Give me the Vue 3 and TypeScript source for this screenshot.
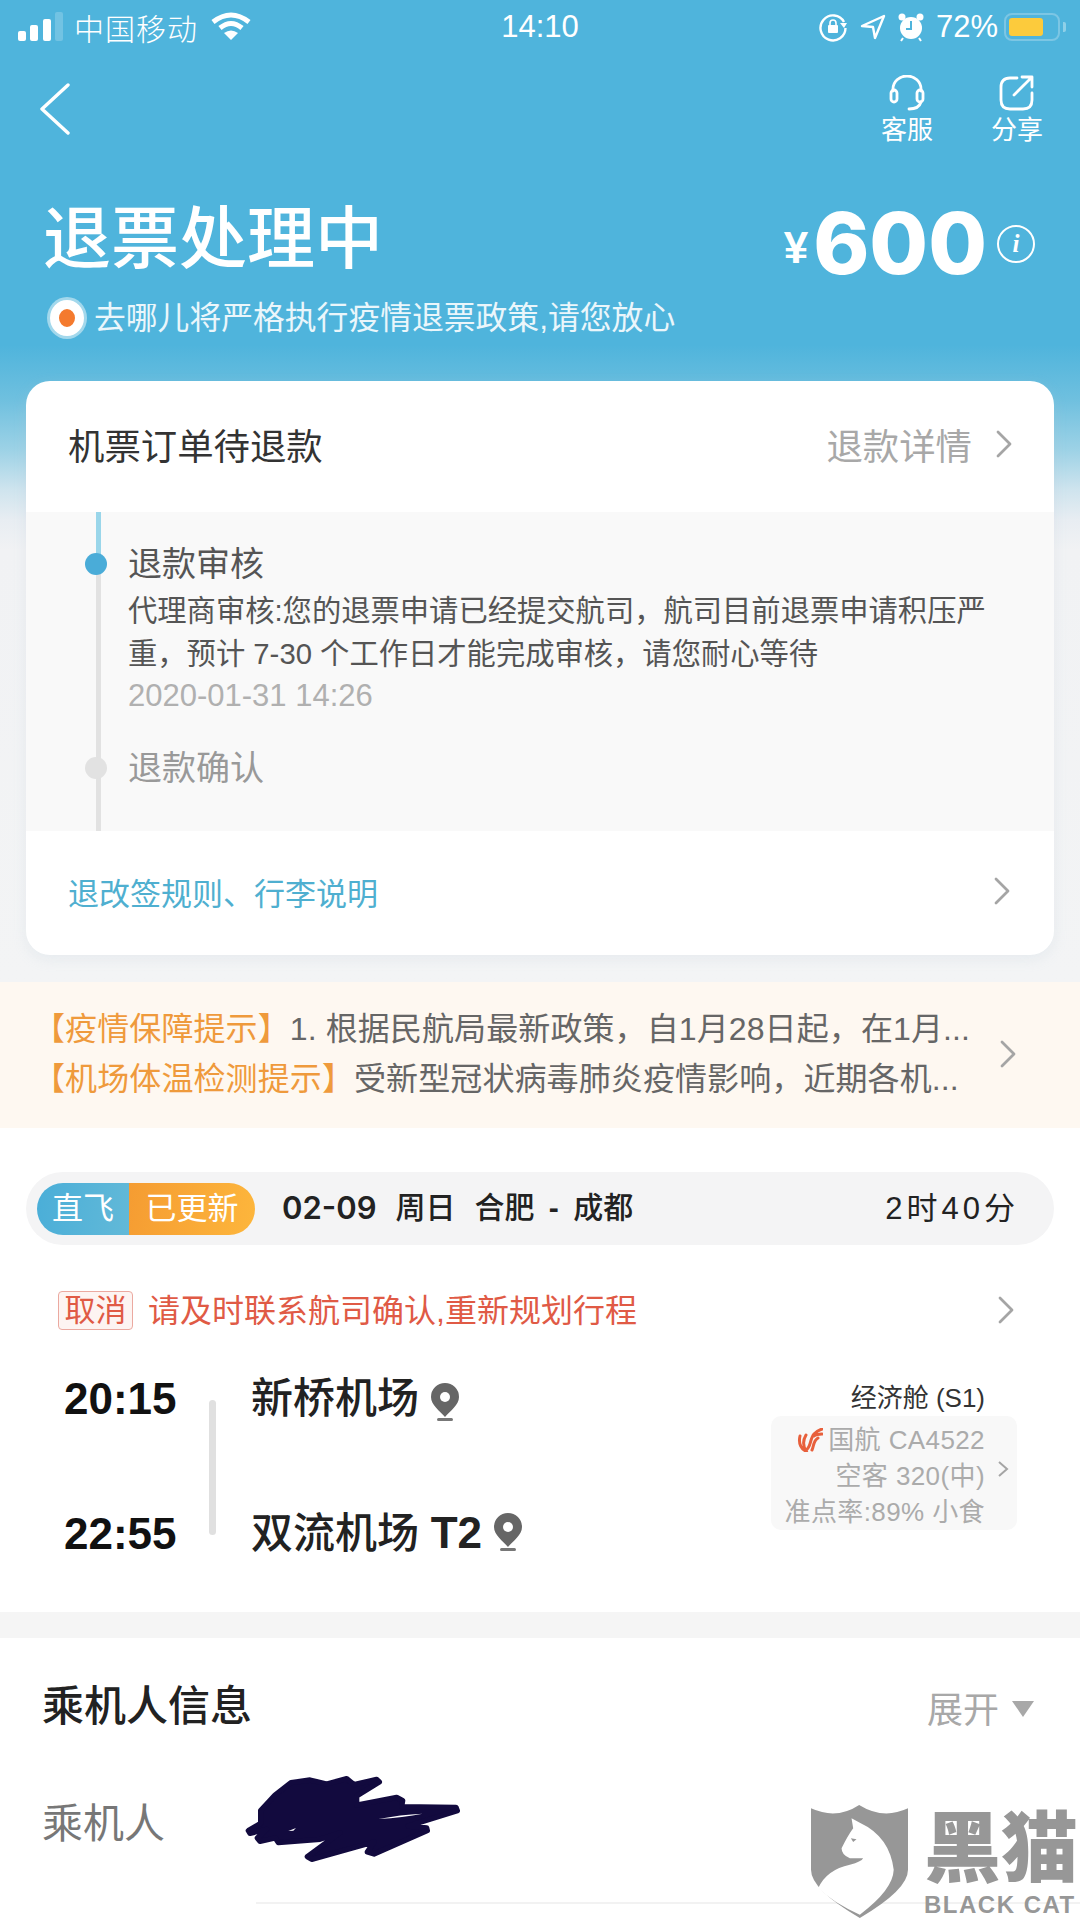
<template>
  <div class="page">
    <div class="top">
      <header class="hero">
        <div class="status">
          <div class="status-left">
            <svg class="signal" viewBox="0 0 46 30" width="46" height="30">
              <rect x="0" y="19" width="8" height="10" rx="2" fill="#fff" />
              <rect x="12" y="13" width="8" height="16" rx="2" fill="#fff" />
              <rect x="25" y="7" width="8" height="22" rx="2" fill="#fff" />
              <rect x="37" y="0" width="8" height="29" rx="2" fill="#fff" opacity="0.2" />
            </svg>
            <span class="carrier">中国移动</span>
            <svg class="wifi" viewBox="0 0 40 30" width="40" height="30" fill="none" stroke="#fff" stroke-width="5">
              <path d="M2 11 Q20 -3 38 11" />
              <path d="M9 17 Q20 8 31 17" />
              <path d="M20 29 L13 22 Q20 17 27 22 Z" fill="#fff" stroke="none" />
            </svg>
          </div>
          <span class="clock">14:10</span>
          <div class="status-right">
            <svg viewBox="0 0 30 30" width="30" height="30" fill="none" stroke="#fff" stroke-width="2.4">
              <path d="M26 10 A12.5 12.5 0 1 0 27.5 16" />
              <path d="M22 11 L29 11 L26 16 Z" fill="#fff" stroke="none" />
              <rect x="10" y="13" width="10" height="8" rx="1" fill="#fff" stroke="none" />
              <path d="M12 13 V11 A3 3 0 0 1 18 11 V13" stroke-width="1.6" />
            </svg>
            <svg viewBox="0 0 26 26" width="26" height="26" fill="none" stroke="#fff" stroke-width="2.4" stroke-linejoin="round">
              <path d="M2 12 L24 2 L15 24 L13 13 Z" />
            </svg>
            <svg viewBox="0 0 26 30" width="26" height="30">
              <circle cx="13" cy="16" r="11" fill="#fff" />
              <path d="M13 9 V17 H8" fill="none" stroke="#4fb4dc" stroke-width="2" />
              <circle cx="4" cy="5" r="3.5" fill="#fff" />
              <circle cx="22" cy="5" r="3.5" fill="#fff" />
              <path d="M5 26 L3 29 M21 26 L23 29" stroke="#fff" stroke-width="2" />
            </svg>
            <span class="percent">72%</span>
            <div class="battery"><i class="battery-fill"></i></div>
            <i class="battery-cap"></i>
          </div>
        </div>

        <div class="nav">
          <svg class="back" viewBox="0 0 30 52" width="30" height="52" fill="none" stroke="#fff" stroke-width="3.4" stroke-linecap="round" stroke-linejoin="round">
            <path d="M28 2 L2 26 L28 50" />
          </svg>
          <div class="nav-actions">
            <div class="nav-action">
              <svg viewBox="0 0 36 36" width="36" height="36" fill="none" stroke="#fff" stroke-width="2.8" stroke-linecap="round">
                <path d="M4 16 V14 A14 13 0 0 1 32 14 V16" />
                <rect x="2" y="15" width="6" height="12" rx="3" />
                <rect x="28" y="15" width="6" height="12" rx="3" />
                <path d="M32 27 Q30 34 20 34" />
              </svg>
              <span>客服</span>
            </div>
            <div class="nav-action">
              <svg viewBox="0 0 36 36" width="36" height="36" fill="none" stroke="#fff" stroke-width="2.8" stroke-linecap="round" stroke-linejoin="round">
                <path d="M18 3 H11 Q2 3 2 12 V25 Q2 34 11 34 H24 Q33 34 33 25 V18" />
                <path d="M15 20 L33 2 M23 2 H33 V12" />
              </svg>
              <span>分享</span>
            </div>
          </div>
        </div>

        <div class="headline">
          <h1>退票处理中</h1>
          <div class="amount">
            <span class="yen">¥</span><span class="sum">600</span>
            <span class="info">i</span>
          </div>
        </div>
        <div class="assure">
          <i class="assure-dot"></i>
          <span>去哪儿将严格执行疫情退票政策,请您放心</span>
        </div>
      </header>

      <section class="card">
        <div class="card-head">
          <span class="card-title">机票订单待退款</span>
          <span class="card-more">退款详情<svg class="chev" viewBox="0 0 16 28" width="16" height="28"><path d="M2 2 L14 14 L2 26" /></svg></span>
        </div>
        <div class="timeline">
          <div class="step">
            <i class="dot active"></i>
            <div class="step-title">退款审核</div>
            <p class="step-desc">代理商审核:您的退票申请已经提交航司，航司目前退票申请积压严重，预计 7-30 个工作日才能完成审核，请您耐心等待</p>
            <div class="step-date">2020-01-31 14:26</div>
          </div>
          <div class="step pending">
            <i class="dot"></i>
            <div class="step-title">退款确认</div>
          </div>
        </div>
        <div class="card-foot">
          <span>退改签规则、行李说明</span>
          <svg class="chev" viewBox="0 0 16 28" width="16" height="28"><path d="M2 2 L14 14 L2 26" /></svg>
        </div>
      </section>
    </div>

    <section class="notice">
      <div class="notice-lines">
        <div v-for="n in notices" :key="n.tag" class="notice-line"><em>【{{ n.tag }}】</em>{{ n.text }}</div>
      </div>
      <svg class="chev" viewBox="0 0 16 28" width="16" height="28"><path d="M2 2 L14 14 L2 26" /></svg>
    </section>

    <section class="flight">
      <div class="pill">
        <div class="tags"><span class="tag-blue">直飞</span><span class="tag-orange">已更新</span></div>
        <div class="route">
          <span class="route-date">02-09</span>
          <span>周日</span>
          <span class="route-city">合肥 <b>-</b> 成都</span>
        </div>
        <span class="duration">2时40分</span>
      </div>

      <div class="cancel">
        <span class="cancel-badge">取消</span>
        <span class="cancel-msg">请及时联系航司确认,重新规划行程</span>
        <svg class="chev" viewBox="0 0 16 28" width="16" height="28"><path d="M2 2 L14 14 L2 26" /></svg>
      </div>

      <div class="legs">
        <div class="times">
          <span>20:15</span>
          <span>22:55</span>
        </div>
        <i class="leg-line"></i>
        <div class="airports">
          <div class="airport">新桥机场
            <svg class="pin" viewBox="0 0 28 38" width="28" height="38">
              <path d="M14 0 A14 14 0 0 1 28 14 C28 22 19 28 14 34 C9 28 0 22 0 14 A14 14 0 0 1 14 0 Z" fill="#666" />
              <circle cx="14" cy="14" r="5" fill="#fff" />
              <rect x="6" y="35" width="16" height="3" rx="1.5" fill="#777" />
            </svg>
          </div>
          <div class="airport"><span>双流机场 <b>T2</b></span>
            <svg class="pin" viewBox="0 0 28 38" width="28" height="38">
              <path d="M14 0 A14 14 0 0 1 28 14 C28 22 19 28 14 34 C9 28 0 22 0 14 A14 14 0 0 1 14 0 Z" fill="#666" />
              <circle cx="14" cy="14" r="5" fill="#fff" />
              <rect x="6" y="35" width="16" height="3" rx="1.5" fill="#777" />
            </svg>
          </div>
        </div>
        <div class="plane">
          <div class="cabin">经济舱 (S1)</div>
          <div class="plane-box">
            <div class="plane-lines">
              <div class="plane-line">
                <svg viewBox="0 0 26 24" width="26" height="24" fill="none" stroke="#e8603c" stroke-width="3" stroke-linecap="round">
                  <path d="M3 8 C1 16 5 22 9 23 C6 18 6 12 9 7" />
                  <path d="M9 22 C14 20 13 10 17 6 C19 4 22 2 25 1" />
                  <path d="M15 22 C17 18 16 13 21 10 M17 8 C19 6 22 6 25 6" />
                </svg>
                国航 CA4522
              </div>
              <div class="plane-line">空客 320(中)</div>
              <div class="plane-line">准点率:89% 小食</div>
            </div>
            <svg class="mini-chev" viewBox="0 0 12 18" width="12" height="18"><path d="M2 2 L10 9 L2 16" /></svg>
          </div>
        </div>
      </div>
    </section>

    <section class="people">
      <div class="people-head">
        <h2>乘机人信息</h2>
        <span class="expand">展开<i class="caret"></i></span>
      </div>
      <div class="people-row">
        <span class="people-label">乘机人</span>
        <svg class="scribble" viewBox="0 0 720 360" width="240" height="120">
          <path d="M55 212 L92 190 L92 152 L135 105 L183 68 L240 60 L290 72 L350 56 L372 74 L440 58 L448 66 L380 108 L380 135 L500 112 L518 122 L515 140 L678 142 L682 152 L535 198 L590 204 L592 212 L432 282 L412 276 L432 246 L245 298 L232 290 L330 218 L270 238 L145 248 L136 234 L90 244 L82 234 L110 208 L60 220 Z" fill="#120a3e" stroke="#120a3e" stroke-width="16" stroke-linejoin="round" />
          <path d="M445 177 Q510 164 578 161 Q520 173 445 177 Z" fill="#fff" />
          <path d="M175 213 L198 204 L190 212 Z" fill="#fff" />
        </svg>
      </div>
      <i class="people-rule"></i>
    </section>

    <div class="watermark">
      <svg viewBox="33 45 292 340" width="97" height="113">
        <path d="M33 55 Q110 90 178 45 Q250 90 325 55 V240 Q325 300 180 385 Q33 300 33 240 Z" fill="#979797" />
        <path d="M155 85 L180 98 Q270 140 282 240 Q280 300 180 375 Q100 340 55 295 Q80 240 150 225 Q185 215 190 205 L150 205 Q125 195 125 175 Q145 135 160 115 Z" fill="#fff" />
        <path d="M153 145 L170 148 L160 156 Z" fill="#979797" />
      </svg>
      <div class="wm-text">
        <div class="wm-cn">黑猫</div>
        <div class="wm-en">BLACK CAT</div>
      </div>
    </div>
  </div>
</template>

<script setup lang="ts">
const notices = [
  { tag: '疫情保障提示', text: '1. 根据民航局最新政策，自1月28日起，在1月...' },
  { tag: '机场体温检测提示', text: '受新型冠状病毒肺炎疫情影响，近期各机...' }
]
</script>

<style>
html, body { margin: 0; background: #fff; }
</style>

<style scoped>
.page {
  position: relative;
  width: 1080px;
  height: 1920px;
  overflow: hidden;
  background: #fff;
  font-family: "Liberation Sans", "Noto Sans CJK SC", sans-serif;
  color: #333;
}
.top {
  height: 982px;
  background: linear-gradient(180deg, #4fb4dc 0, #4fb4dc 345px, #6fc0df 400px, #9dd2e6 450px, #cfe4ee 490px, #e8edf2 520px, #f1f2f4 550px, #f3f4f5 982px);
}
.hero {
  height: 381px;
  box-sizing: border-box;
  color: #fff;
}
.status {
  display: flex;
  align-items: center;
  justify-content: space-between;
  height: 54px;
  padding: 0 14px 0 18px;
  position: relative;
}
.status-left, .status-right { display: flex; align-items: center; }
.signal { margin-right: 10px; }
.carrier { font-size: 30px; font-weight: 300; margin-right: 13px; letter-spacing: 1px; }
.wifi { margin-top: -2px; }
.clock {
  position: absolute;
  left: 0;
  right: 0;
  text-align: center;
  font-size: 31px;
}
.status-right svg { margin-right: 12px; }
.percent { font-size: 31px; margin-right: 6px; }
.battery {
  box-sizing: border-box;
  width: 56px;
  height: 28px;
  padding: 3px;
  border: 2px solid #7cc6e4;
  border-radius: 8px;
}
.battery-fill { display: block; width: 34px; height: 18px; background: #fccb3c; border-radius: 3px; }
.battery-cap { width: 3px; height: 10px; margin-left: 3px; background: #8fd0e8; border-radius: 0 2px 2px 0; }

.nav {
  display: flex;
  justify-content: space-between;
  height: 110px;
  padding: 21px 37px 0 40px;
}
.back { margin-top: 8px; }
.nav-actions { display: flex; gap: 58px; }
.nav-action { display: flex; flex-direction: column; align-items: center; width: 52px; font-size: 26px; line-height: 30px; gap: 4px; }

.headline {
  display: flex;
  align-items: center;
  justify-content: space-between;
  height: 96px;
  padding: 6px 45px 0 43px;
  box-sizing: content-box;
}
h1 { margin: 0; font-size: 68px; font-weight: 500; line-height: 80px; letter-spacing: 0; }
.amount { display: flex; align-items: center; }
.yen { font-size: 44px; font-weight: 700; margin-right: 5px; margin-top: 18px; }
.sum { font-family: Inter, "Liberation Sans", sans-serif; font-size: 85px; font-weight: 800; line-height: 90px; margin-top: 10px; }
.info {
  box-sizing: border-box;
  width: 38px;
  height: 38px;
  margin: 10px 0 0 10px;
  border: 2.5px solid #fff;
  border-radius: 50%;
  font: italic 700 25px/33px "Liberation Serif", serif;
  text-align: center;
}
.assure {
  display: flex;
  align-items: center;
  gap: 10px;
  padding: 10px 0 0 50px;
  font-size: 31.8px;
  line-height: 42px;
  color: #eaf6fb;
}
.assure-dot {
  box-sizing: border-box;
  width: 34px;
  height: 36px;
  background: #f47a2e;
  border: 9px solid #fff;
  border-radius: 50%;
  box-shadow: 0 0 0 3px #a3d8ec;
}

.card {
  position: relative;
  margin: 0 26px;
  background: #fff;
  border-radius: 24px;
  overflow: hidden;
  box-shadow: 0 4px 14px rgba(180, 200, 215, 0.2);
}
.card-head {
  display: flex;
  align-items: center;
  justify-content: space-between;
  box-sizing: border-box;
  height: 131px;
  padding: 0 42px 6px 42px;
}
.card-title { font-size: 36.4px; color: #333; }
.card-more { display: flex; align-items: center; gap: 24px; font-size: 36.4px; color: #a8a8a8; }
.chev { flex: none; fill: none; stroke: #a5a5a5; stroke-width: 2.8; stroke-linecap: round; stroke-linejoin: round; }

.timeline {
  position: relative;
  box-sizing: border-box;
  height: 319px;
  padding: 30px 60px 0 102px;
  background: #f9f9f9;
}
.timeline::before {
  content: "";
  position: absolute;
  left: 70px;
  top: 0;
  bottom: 0;
  width: 5px;
  background: linear-gradient(180deg, #9ad6ea 0, #9ad6ea 50px, #e2e2e2 50px);
}
.step { position: relative; }
.dot {
  position: absolute;
  left: -43px;
  top: 11px;
  width: 22px;
  height: 22px;
  border-radius: 50%;
  background: #e2e2e2;
}
.dot.active { background: #4aacd8; }
.step-title { font-size: 34px; line-height: 44px; color: #555; }
.step-desc { margin: 3px 0 0; font-size: 29.3px; line-height: 43px; color: #555; }
.step-date { font-size: 31px; line-height: 42px; color: #b0b0b0; }
.pending { margin-top: 29px; }
.pending .step-title { color: #999; }

.card-foot {
  display: flex;
  align-items: center;
  justify-content: space-between;
  height: 124px;
  padding: 0 44px 4px 42px;
  box-sizing: border-box;
  font-size: 31px;
  color: #4fafd0;
}

.notice {
  display: flex;
  align-items: center;
  justify-content: space-between;
  box-sizing: border-box;
  height: 146px;
  padding: 0 64px 2px 33px;
  background: #fef8f1;
}
.notice-line { font-size: 32px; line-height: 50px; letter-spacing: 0.1px; color: #666; white-space: nowrap; }
.notice-line em { font-style: normal; color: #ef9a3c; }

.flight { box-sizing: border-box; height: 484px; padding-top: 44px; }
.pill {
  display: flex;
  align-items: center;
  height: 73px;
  margin: 0 26px;
  padding: 0 35px 0 11px;
  background: #f4f4f5;
  border-radius: 37px;
}
.tags { display: flex; height: 52px; margin-right: 27px; border-radius: 26px; overflow: hidden; color: #fff; }
.tag-blue, .tag-orange { display: flex; align-items: center; justify-content: center; padding-bottom: 6px; box-sizing: border-box; font-size: 31px; }
.tag-blue { width: 92px; background: linear-gradient(100deg, #4aaed8, #62b9d8); }
.tag-orange { width: 126px; background: linear-gradient(100deg, #f59c32, #fdb63c); }
.route { display: flex; flex: 1; align-items: center; gap: 19px; padding-bottom: 7px; font-size: 30px; font-weight: 500; color: #222; }
.route-date { font-family: Inter, "Liberation Sans", sans-serif; font-size: 31px; font-weight: 600; margin-top: 4px; }
.route-city b { font-weight: 700; margin: 0 6px; }
.duration { padding-bottom: 7px; font-size: 31px; letter-spacing: 4px; color: #222; }

.cancel {
  display: flex;
  align-items: center;
  height: 40px;
  margin-top: 45px;
  padding: 0 66px 0 58px;
}
.cancel-badge {
  box-sizing: border-box;
  width: 75px;
  height: 39px;
  margin-right: 15px;
  border: 1px solid #eba9a0;
  border-radius: 4px;
  background: #fdf4f2;
  font-size: 31px;
  line-height: 37px;
  text-align: center;
  color: #e05a45;
}
.cancel-msg { flex: 1; margin-top: -4px; font-size: 32px; color: #e05a45; }

.legs { display: flex; margin-top: 44px; padding-left: 64px; }
.times {
  display: flex;
  flex-direction: column;
  justify-content: space-between;
  width: 145px;
  height: 185px;
  font-size: 44px;
  font-weight: 700;
  line-height: 50px;
  color: #111;
}
.leg-line { flex: none; width: 7px; height: 135px; margin-top: 26px; background: #e0e0e0; border-radius: 4px; }
.airports {
  display: flex;
  flex: 1;
  flex-direction: column;
  justify-content: space-between;
  height: 185px;
  margin-left: 35px;
}
.airport { display: flex; align-items: center; gap: 12px; font-size: 42px; font-weight: 500; line-height: 50px; color: #222; }
.airport b { font-size: 44px; font-weight: 700; }
.pin { margin-top: 6px; }
.airport:last-child .pin { margin-top: -4px; }
.plane { width: 246px; margin-right: 63px; margin-top: 0; }
.cabin { height: 48px; padding-right: 32px; font-size: 26px; line-height: 48px; text-align: right; color: #333; }
.plane-box {
  position: relative;
  box-sizing: border-box;
  height: 114px;
  margin-top: -6px;
  padding: 6px 32px 0 0;
  background: #f8f8f8;
  border-radius: 10px;
}
.plane-line { display: flex; align-items: center; justify-content: flex-end; gap: 5px; font-size: 26px; line-height: 36px; letter-spacing: 0.4px; color: #ababab; white-space: nowrap; }
.mini-chev {
  position: absolute;
  right: 8px;
  top: 44px;
  fill: none;
  stroke: #a5a5a5;
  stroke-width: 2;
}

.people { position: relative; height: 282px; border-top: 26px solid #f5f5f5; }
.people-head {
  display: flex;
  align-items: center;
  justify-content: space-between;
  padding: 43px 46px 0 42px;
}
h2 { margin: 0; font-size: 42px; font-weight: 500; line-height: 52px; color: #222; }
.expand { display: flex; align-items: center; gap: 13px; font-size: 36px; color: #a8a8a8; }
.caret { width: 0; height: 0; margin-top: 4px; border: 11px solid transparent; border-top: 16px solid #a8a8a8; border-bottom: 0; }
.people-row { display: flex; align-items: center; height: 56px; margin-top: 63px; padding-left: 42px; }
.people-label { width: 188px; font-size: 41px; line-height: 56px; color: #777; }
.scribble { margin: -36px 0 -28px; flex: none; }
.people-rule { display: block; height: 2px; margin: 50px 0 0 256px; background: #f2f2f2; }

.watermark {
  position: absolute;
  left: 811px;
  top: 1805px;
  display: flex;
  gap: 16px;
  width: 269px;
}
.wm-text { margin-top: 4px; }
.wm-cn { font-size: 77px; font-weight: 900; line-height: 80px; color: #979797; white-space: nowrap; }
.wm-en { font-size: 24px; font-weight: 700; line-height: 24px; margin-top: 4px; letter-spacing: 1.5px; color: #979797; white-space: nowrap; }
</style>
